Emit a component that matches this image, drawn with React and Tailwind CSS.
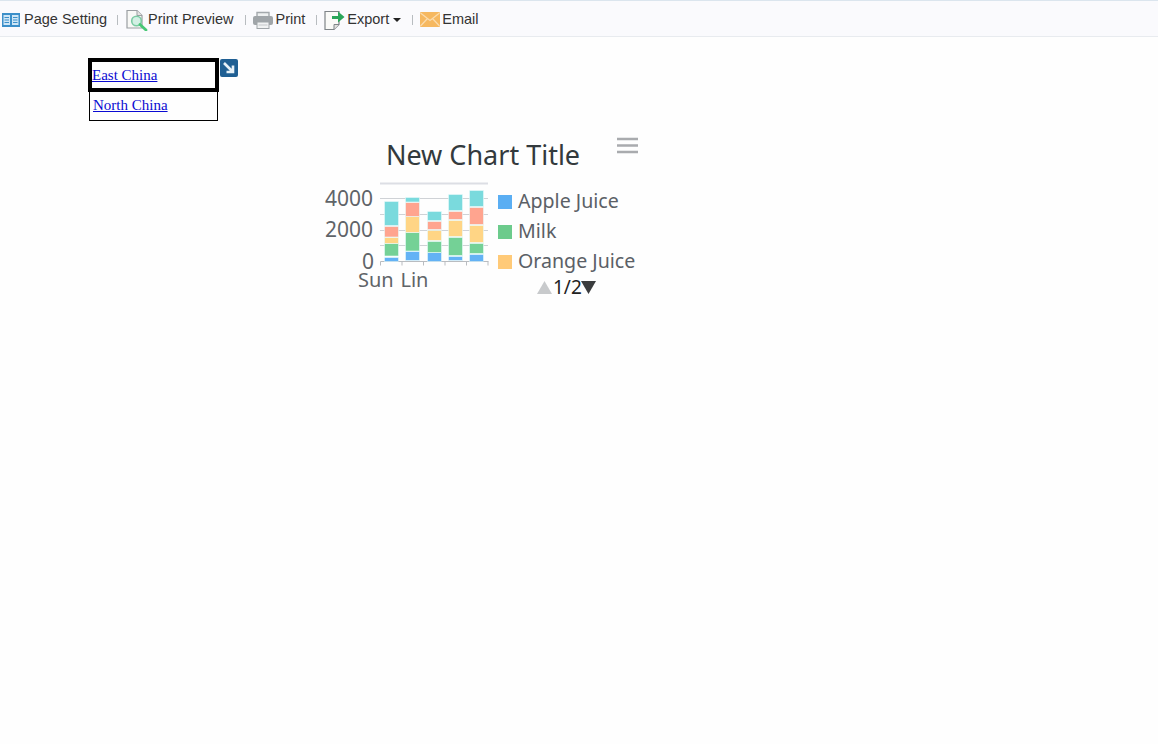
const bars = [
  { x: 385, segs: [[258, 261, 'blue'], [244, 255.5, 'green'], [238, 243, 'orange'], [227, 236.5, 'red'], [202, 225, 'teal']] },
  { x: 406, segs: [[252, 260, 'blue'], [233, 250.5, 'green'], [217, 232, 'orange'], [203, 216, 'red'], [198, 201.5, 'teal']] },
  { x: 428, segs: [[253, 261, 'blue'], [242, 252, 'green'], [231, 240, 'orange'], [222, 229, 'red'], [212, 220, 'teal']] },
  { x: 449, segs: [[257, 260, 'blue'], [238, 255, 'green'], [221, 236, 'orange'], [212, 219, 'red'], [195, 210, 'teal']] },
  { x: 470, segs: [[255, 261, 'blue'], [244, 253, 'green'], [226, 242, 'orange'], [208, 224, 'red'], [191, 206, 'teal']] },
];

const colors = {
  blue: '#63b2f5',
  green: '#74d196',
  orange: '#ffd585',
  red: '#ffa48f',
  teal: '#7adadd',
};

function BookIcon() {
  return (
    <svg width="18" height="14" viewBox="0 0 18 14" className="shrink-0">
      <rect x="0" y="0" width="18" height="14" fill="#3c8fc9" />
      <rect x="1.500" y="2" width="6.500" height="10" fill="#cfe6f6" />
      <rect x="10" y="2" width="6.500" height="10" fill="#cfe6f6" />
      <path d="M2.500 4.500h4.500M2.500 7h4.500M2.500 9.500h4.500M11 4.500h4.500M11 7h4.500M11 9.500h4.500" stroke="#3c8fc9" strokeWidth="1" />
    </svg>
  );
}

function PreviewIcon() {
  return (
    <svg width="22" height="22" viewBox="0 0 22 22" className="shrink-0">
      <path d="M1 1.500h10l5 5V19H1z" fill="#f8f8f6" stroke="#9a9ea2" strokeWidth="1.200" />
      <path d="M11 1.500v5h5" fill="#e4e4e2" stroke="#9a9ea2" />
      <circle cx="10.500" cy="12" r="4.800" fill="#d3f0e4" stroke="#7ccba4" strokeWidth="1.600" />
      <path d="M14 15.500l6 5.500" stroke="#48c775" strokeWidth="2.800" strokeLinecap="round" />
    </svg>
  );
}

function PrintIcon() {
  return (
    <svg width="20" height="18" viewBox="0 0 20 18" className="shrink-0">
      <path d="M4 5V1.500h12V5" fill="#eef0f1" stroke="#a3a8ac" strokeWidth="1.400" />
      <rect x="0" y="5" width="20" height="9" rx="2" fill="#a0a5a9" />
      <rect x="4" y="11" width="12" height="6.500" fill="#f1f2f3" stroke="#a0a5a9" />
      <path d="M5.500 14h9" stroke="#c4c7ca" />
    </svg>
  );
}

function ExportIcon() {
  return (
    <svg width="21" height="22" viewBox="0 0 21 22" className="shrink-0">
      <path d="M1 2.500h14v13l-5 5H1z" fill="#fafaf8" stroke="#7f8488" strokeWidth="1.200" />
      <path d="M10 20.500v-5h5" fill="#e2e2e0" stroke="#7f8488" />
      <path d="M8 7h6V2.500L20.500 8 14 13.500V10H8z" fill="#2aa65a" />
    </svg>
  );
}

function MailIcon() {
  return (
    <svg width="20" height="15" viewBox="0 0 20 15" className="shrink-0">
      <rect width="20" height="15" rx="1" fill="#f6b860" />
      <path d="M0.500 1l9.500 7.500L19.500 1M0.500 14l7-7.500M19.500 14l-7-7.500" fill="none" stroke="#fbdcae" strokeWidth="1.200" />
    </svg>
  );
}

function Sep() {
  return <div className="w-px h-[10px] bg-[#b8bcc0] shrink-0" />;
}

function Chart() {
  const label = { fontFamily: '"Noto Sans", "Open Sans", sans-serif' };
  return (
    <svg width="330" height="175" viewBox="320 130 330 175" className="block ml-[320px] mt-[9px]" style={label}>
      <text x="483" y="165" textAnchor="middle" fontSize="27" fill="#333a3d">New Chart Title</text>
      <path d="M617 139h21M617 145.500h21M617 152h21" stroke="#a9abae" strokeWidth="2.500" />

      <path d="M380 183.500h108" stroke="#dcdee4" strokeWidth="2" />
      <path d="M380 198.500h108M380 214.500h108M380 230.500h108M380 245.500h108" stroke="#cfd2d6" />
      <path d="M380.500 261.500h108M380.500 261.500v4M402 261.500v4M423.500 261.500v4M445 261.500v4M466.500 261.500v4M488 261.500v4" stroke="#b9bcc0" fill="none" />

      {bars.map((bar) =>
        bar.segs.map(([top, bottom, c]) => (
          <rect key={bar.x + c} x={bar.x - 0.5} y={top - 0.5} width="14" height={bottom - top + 1} fill={colors[c]} stroke="#e8fbfa" strokeWidth="0.600" />
        )),
      )}

      <g fontSize="21" fill="#5f6468" textAnchor="end">
        <text x="373" y="206">4000</text>
        <text x="373" y="237">2000</text>
        <text x="374" y="269">0</text>
      </g>
      <text x="358" y="287" fontSize="20" fill="#5f6468" wordSpacing="1.500">Sun Lin</text>

      <rect x="498" y="195" width="14" height="14" fill="#5aaef3" />
      <rect x="498" y="225" width="14" height="14" fill="#6ccb8c" />
      <rect x="498" y="255" width="14" height="14" fill="#ffca78" />
      <g fontSize="19.600" fill="#5b6066">
        <text x="518" y="208">Apple Juice</text>
        <text x="518" y="238">Milk</text>
        <text x="518" y="268">Orange Juice</text>
      </g>

      <path d="M537 294l7.500-13 7.500 13z" fill="#c8cacc" />
      <text x="553" y="294" fontSize="19" fill="#222">1/2</text>
      <path d="M581 281h15l-7.500 13z" fill="#3a3c3e" />
    </svg>
  );
}

export default function App() {
  return (
    <div className="min-h-[744px] bg-[#fefefe]">
      <div className="h-[37px] pt-[2px] flex items-center bg-[#fafafd] border-t border-t-[#dbe5ee] border-b border-b-[#e8ebef] text-[14.500px] text-[#333] font-['Liberation_Sans',Arial,sans-serif]">
        <div className="ml-[2px]"><BookIcon /></div>
        <span className="ml-[4px]">Page Setting</span>
        <div className="ml-[10px]"><Sep /></div>
        <div className="ml-[8px]"><PreviewIcon /></div>
        <span>Print Preview</span>
        <div className="ml-[12px]"><Sep /></div>
        <div className="ml-[7px]"><PrintIcon /></div>
        <span className="ml-[2px]">Print</span>
        <div className="ml-[11px]"><Sep /></div>
        <div className="ml-[7px]"><ExportIcon /></div>
        <span className="ml-[2px]">Export</span>
        <span className="ml-[4px] w-0 h-0 border-x-[4px] border-x-transparent border-t-[4px] border-t-[#222]" />
        <div className="ml-[11px]"><Sep /></div>
        <div className="ml-[7px]"><MailIcon /></div>
        <span className="ml-[2px]">Email</span>
      </div>

      <div className="ml-[88px] mt-[21px] flex items-start">
        <div className="w-[131px] font-['Liberation_Serif','Times_New_Roman',serif] text-[15px] text-[#0a0ad2]">
          <div className="h-[34px] border-[4px] border-black flex items-center">
            <a href="#" className="underline">East China</a>
          </div>
          <div className="ml-[1px] w-[129px] h-[29px] pb-[2px] border border-black border-t-0 flex items-center pl-[3px]">
            <a href="#" className="underline">North China</a>
          </div>
        </div>
        <svg width="18" height="18" viewBox="0 0 18 18" className="ml-[1px] mt-[1px] shrink-0">
          <rect width="18" height="18" rx="2" fill="#1f5f93" />
          <path d="M4 4l8 8M13 6.500V13H6.500" fill="none" stroke="#e6f1f8" strokeWidth="2.600" />
        </svg>
      </div>

      <Chart />
    </div>
  );
}
